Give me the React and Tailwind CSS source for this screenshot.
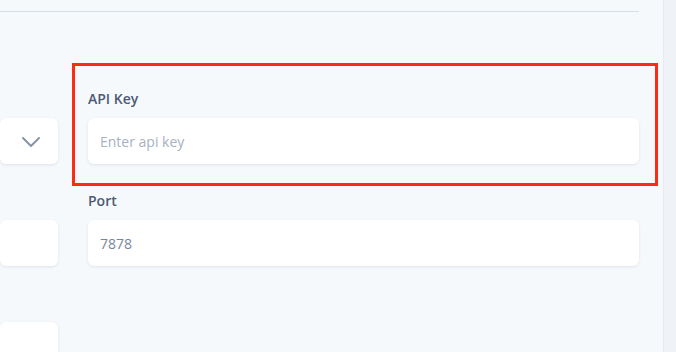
import { ChevronDown } from "lucide-react";

const inputCls =
  "h-[46px] w-full rounded-md bg-white px-3 text-[14px] text-[#7a8699] placeholder:text-[#a7b1c2] shadow-[0_1px_3px_rgba(50,60,90,0.12)] outline-none";

const Field = ({ label, children }) => (
  <div className="flex flex-col">
    <div className="h-[18px] text-[14px] font-semibold leading-[18px] text-[#4d5a75]">
      {label}
    </div>
    <div className="mt-[10px]">{children}</div>
  </div>
);

const App = () => {
  return (
    <div className="relative flex h-[352px] w-[676px] overflow-hidden bg-[#f6f9fc] font-['Open_Sans',sans-serif]">
      <div className="w-[663px]">
        <div className="mt-[11px] h-px w-[639px] bg-[#d8dee6]" />
        <div className="mt-[78px] grid grid-cols-[58px_551px] gap-x-[30px] gap-y-[28px]">
          <Field label="">
            <div className="relative">
              <div className={inputCls}></div>
              <ChevronDown
                className="absolute left-[15px] top-[8px] text-[#8793a7]"
                size={32}
                strokeWidth={1.5}
              />
            </div>
          </Field>
          <Field label="API Key">
            <input className={inputCls} placeholder="Enter api key" />
          </Field>
          <Field label="">
            <div className={inputCls}></div>
          </Field>
          <Field label="Port">
            <input className={inputCls} defaultValue="7878" />
          </Field>
          <Field label="">
            <div className={inputCls}></div>
          </Field>
          <div />
        </div>
      </div>
      <div className="w-[13px] border-l border-[#e7ebf1] bg-[#eff2f7]" />
      {/* highlight annotation */}
      <div className="pointer-events-none absolute left-[72px] top-[63px] h-[123px] w-[586px] border-[3px] border-[#ff2a12]" />
    </div>
  );
};

export default App;
